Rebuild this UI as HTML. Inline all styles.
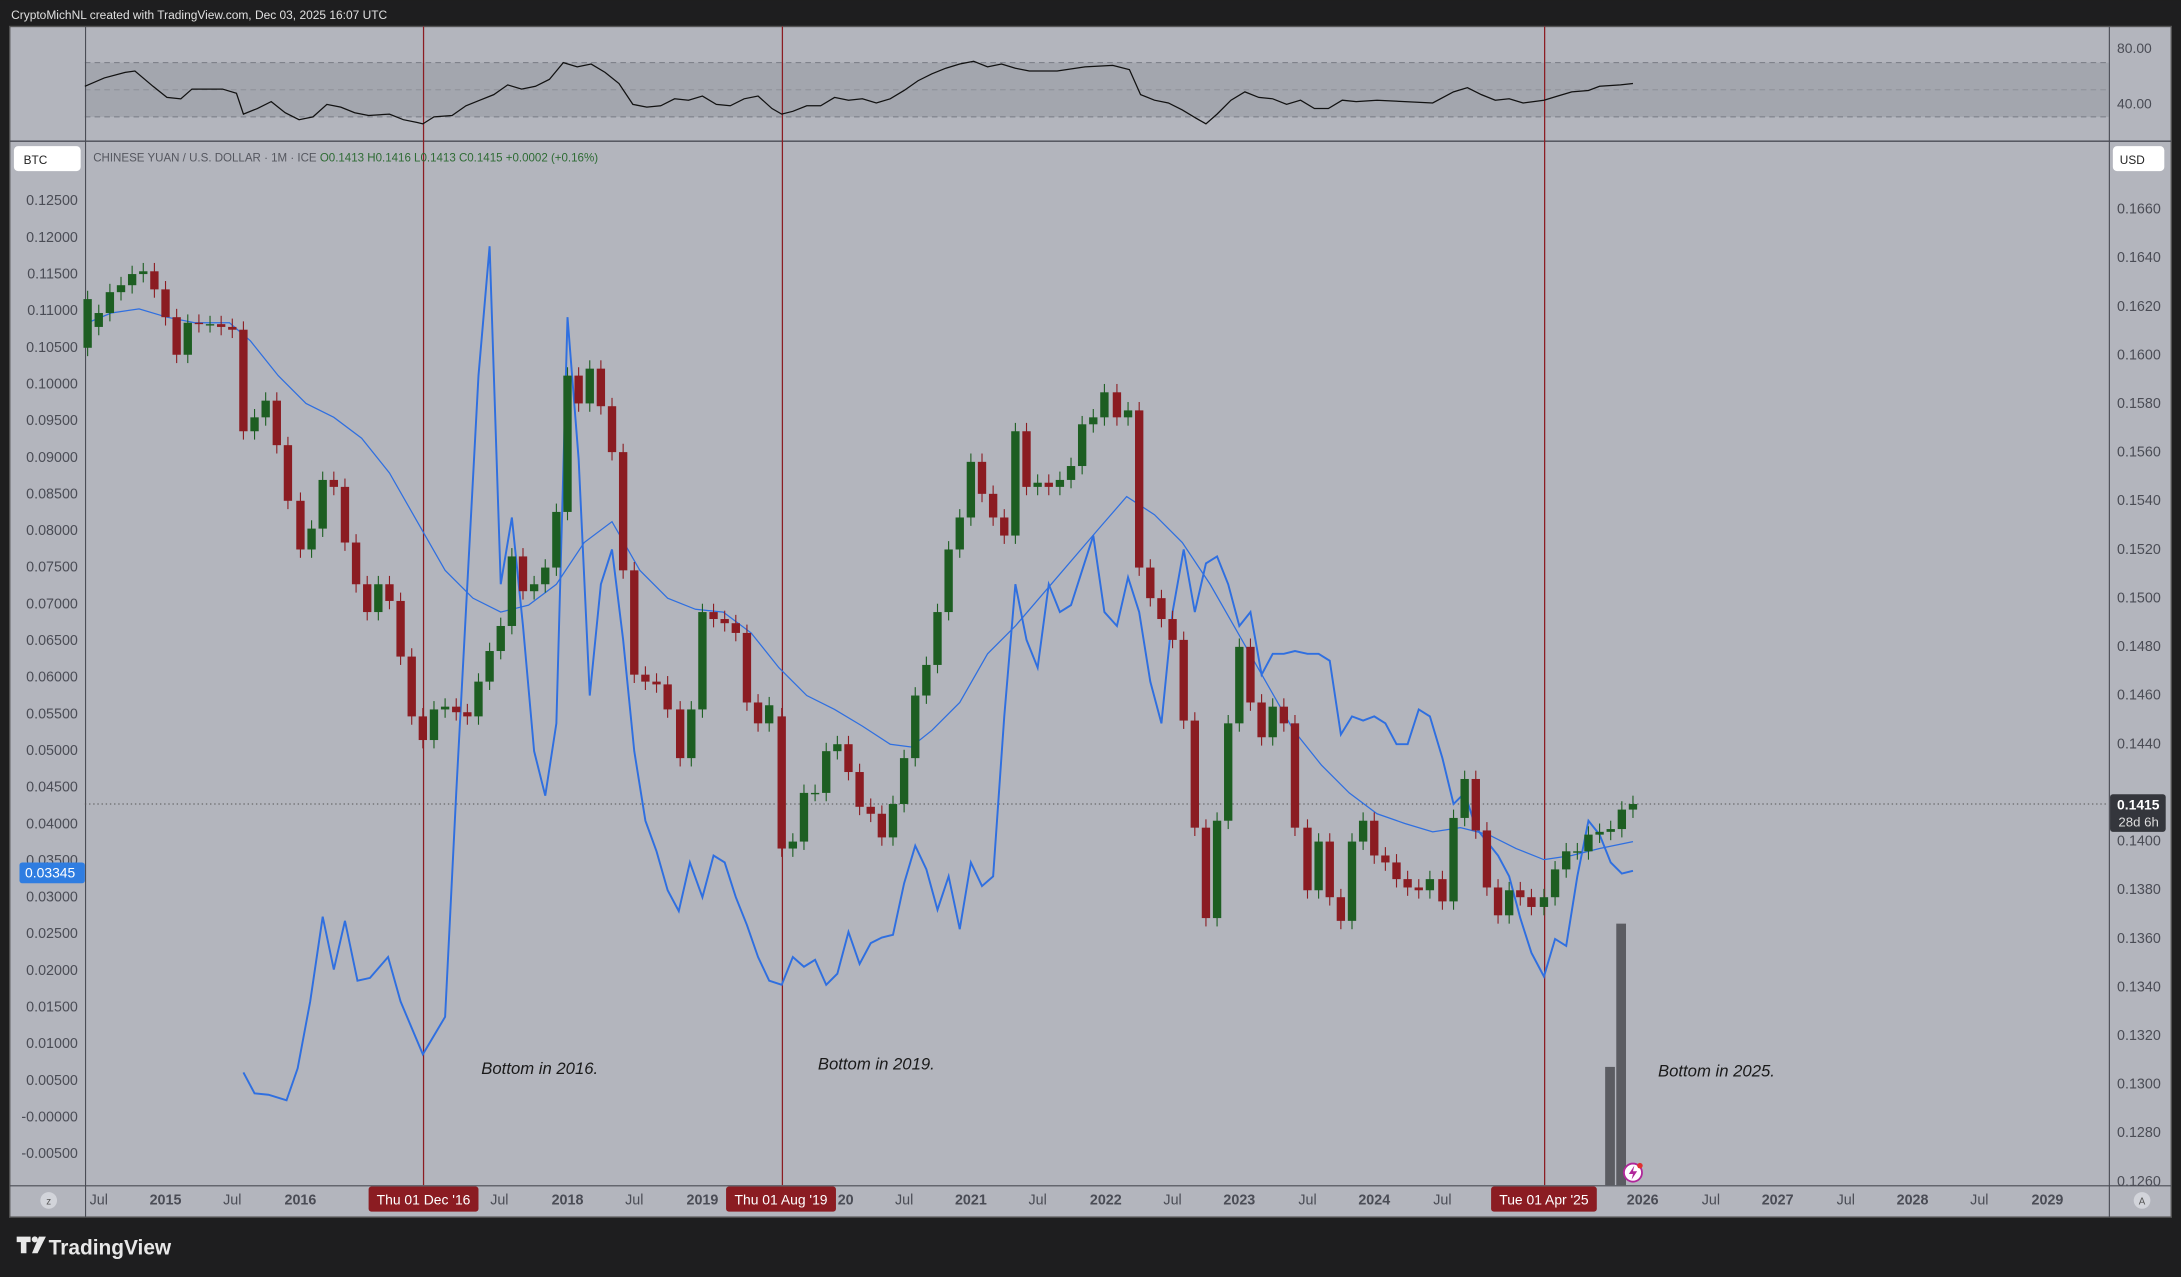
<!DOCTYPE html>
<html><head><meta charset="utf-8"><style>
html,body{margin:0;padding:0;background:#1e1e1f;overflow:hidden}
svg{display:block}
text{font-family:"Liberation Sans",sans-serif}
</style></head><body>
<svg id="s" width="2181" height="1277" viewBox="0 0 1568 918" xmlns="http://www.w3.org/2000/svg">
<rect width="1568" height="918" fill="#1e1e1f"/>
<text x="8" y="13.5" font-size="8.6" fill="#e0e0e0">CryptoMichNL created with TradingView.com, Dec 03, 2025 16:07 UTC</text>
<rect x="7" y="19" width="1554" height="856" fill="#b3b5bd" stroke="#555" stroke-width="1"/>
<rect x="61" y="45" width="1455" height="39" fill="#a3a6ae"/>
<line x1="61" y1="45" x2="1516" y2="45" stroke="#787b84" stroke-dasharray="4,3" stroke-width="0.7"/>
<line x1="61" y1="64.5" x2="1516" y2="64.5" stroke="#8a8d95" stroke-dasharray="4,3" stroke-width="0.6"/>
<line x1="61" y1="84" x2="1516" y2="84" stroke="#787b84" stroke-dasharray="4,3" stroke-width="0.7"/>
<line x1="7" y1="101.5" x2="1561" y2="101.5" stroke="#4a4c55" stroke-width="1"/>
<line x1="61.5" y1="19" x2="61.5" y2="875" stroke="#4a4c55" stroke-width="0.8"/>
<line x1="1516.5" y1="19" x2="1516.5" y2="875" stroke="#4a4c55" stroke-width="0.8"/>
<line x1="7" y1="852.5" x2="1561" y2="852.5" stroke="#4a4c55" stroke-width="0.8"/>
<g font-size="10" fill="#4a4c55">
<text x="1522" y="38">80.00</text><text x="1522" y="78">40.00</text>
</g>
<line x1="61" y1="578" x2="1516" y2="578" stroke="#555" stroke-dasharray="1,2" stroke-width="0.7"/>
<line x1="304.5" y1="19" x2="304.5" y2="852" stroke="#8b1c22" stroke-width="0.9"/>
<line x1="562.5" y1="19" x2="562.5" y2="852" stroke="#8b1c22" stroke-width="0.9"/>
<line x1="1110.5" y1="19" x2="1110.5" y2="852" stroke="#8b1c22" stroke-width="0.9"/>
<g id="g"></g>
<rect x="10" y="105" width="48" height="18" rx="3" fill="#fff"/>
<text x="17" y="118" font-size="8.5" fill="#222">BTC</text>
<rect x="1519" y="105" width="37" height="18" rx="3" fill="#fff"/>
<text x="1524" y="118" font-size="8.5" fill="#222">USD</text>
<text x="67" y="116" font-size="8.3" fill="#55575f">CHINESE YUAN / U.S. DOLLAR · 1M · ICE <tspan fill="#2e6b34">O0.1413  H0.1416  L0.1413  C0.1415  +0.0002 (+0.16%)</tspan></text>
<g id="la" font-size="10.3" fill="#4a4c55"></g>
<g id="ra" font-size="10.3" fill="#4a4c55"></g>
<rect x="14" y="620" width="47" height="15" rx="2" fill="#2f7de1"/>
<text x="18" y="631" font-size="10" fill="#fff">0.03345</text>
<rect x="1517" y="571" width="40" height="27" rx="2" fill="#34363c"/>
<text x="1522" y="582" font-size="10" fill="#fff" font-weight="bold">0.1415</text>
<text x="1523" y="594" font-size="9.5" fill="#ddd">28d 6h</text>
<g font-size="12" font-style="italic" fill="#1a1a1a">
<text x="346" y="772">Bottom in 2016.</text>
<text x="588" y="769">Bottom in 2019.</text>
<text x="1192" y="774">Bottom in 2025.</text>
</g>
<g id="ta" font-size="10.3" fill="#4a4c55"></g>
<rect x="265" y="853" width="79" height="18" rx="2" fill="#8b1c22"/>
<text x="304.5" y="866" font-size="10" fill="#fff" text-anchor="middle">Thu 01 Dec '16</text>
<rect x="522" y="853" width="79" height="18" rx="2" fill="#8b1c22"/>
<text x="561.5" y="866" font-size="10" fill="#fff" text-anchor="middle">Thu 01 Aug '19</text>
<rect x="1072" y="853" width="76" height="18" rx="2" fill="#8b1c22"/>
<text x="1110" y="866" font-size="10" fill="#fff" text-anchor="middle">Tue 01 Apr '25</text>
<circle cx="35" cy="863" r="6" fill="#d2d4da"/><text x="35" y="866" font-size="7" fill="#555" text-anchor="middle">z</text>
<circle cx="1540" cy="863" r="6" fill="#d2d4da"/><text x="1540" y="866" font-size="7" fill="#555" text-anchor="middle">A</text>
<circle cx="1174" cy="843" r="6.5" fill="#fff" stroke="#b0279a" stroke-width="1.3"/>
<path d="M1175 838 L1171 844 L1174 844 L1173 848 L1177 842 L1174 842Z" fill="#b0279a"/>
<circle cx="1179" cy="838" r="2" fill="#e03030"/>
<g fill="#e8e8e8">
<path d="M12 889 h10 v4 h-3 v8 h-4 v-8 h-3z"/><circle cx="25" cy="891" r="2.2"/><path d="M28 889 h5 l-6 12 h-4z"/>
</g>
<text x="35" y="902" font-size="15" font-weight="bold" fill="#e8e8e8">TradingView</text>
</svg>
<script>
var NS='http://www.w3.org/2000/svg',g=document.getElementById('g'),out='';
function t(id,s){document.getElementById(id).innerHTML+=s;}
// left axis
var lv=['0.12500','0.12000','0.11500','0.11000','0.10500','0.10000','0.09500','0.09000','0.08500','0.08000','0.07500','0.07000','0.06500','0.06000','0.05500','0.05000','0.04500','0.04000','0.03500','0.03000','0.02500','0.02000','0.01500','0.01000','0.00500','-0.00000','-0.00500'];
lv.forEach(function(v,i){var y=144+i*26.35;t('la','<text x="56" y="'+(y+3.5)+'" text-anchor="end">'+v+'</text>');});
for(var i=0;i<=20;i++){var v=(0.166-i*0.002).toFixed(4),y=150+i*34.95;if(Math.abs(y-578)<12||Math.abs(y-592)<10)continue;t('ra','<text x="1522" y="'+(y+3.5)+'">'+v+'</text>');}
var tl=[[71,'Jul',0],[119,'2015',1],[167,'Jul',0],[216,'2016',1],[359,'Jul',0],[408,'2018',1],[456,'Jul',0],[505,'2019',1],[608,'20',1],[650,'Jul',0],[698,'2021',1],[746,'Jul',0],[795,'2022',1],[843,'Jul',0],[891,'2023',1],[940,'Jul',0],[988,'2024',1],[1037,'Jul',0],[1181,'2026',1],[1230,'Jul',0],[1278,'2027',1],[1327,'Jul',0],[1375,'2028',1],[1423,'Jul',0],[1472,'2029',1]];
tl.forEach(function(a){t('ta','<text x="'+a[0]+'" y="866" text-anchor="middle"'+(a[2]?' font-weight="bold"':'')+'>'+a[1]+'</text>');});
// RSI
var rsi=[[61,62],[75,56],[90,52],[97,51],[110,62],[120,70],[130,71],[138,64],[160,64],[170,67],[175,82],[185,78],[195,73],[205,81],[215,86],[225,84],[235,75],[245,77],[255,81],[265,83],[280,82],[290,86],[300,88],[304,89],[312,84],[325,83],[335,76],[345,72],[355,68],[365,61],[375,64],[385,62],[395,57],[405,45],[415,48],[425,46],[435,52],[445,60],[455,75],[465,77],[475,76],[485,71],[495,72],[505,69],[515,75],[525,76],[535,71],[545,69],[555,78],[562,82],[570,80],[580,76],[590,76],[600,70],[610,72],[620,71],[630,74],[640,71],[650,65],[660,58],[670,53],[680,49],[690,46],[700,44],[710,48],[720,46],[730,49],[740,51],[760,51],[780,48],[800,47],[812,50],[820,68],[830,72],[840,74],[850,79],[860,85],[867,89],[875,82],[885,72],[895,66],[905,70],[915,71],[925,75],[935,72],[945,78],[955,78],[965,72],[975,73],[990,72],[1010,73],[1030,74],[1045,66],[1055,63],[1065,68],[1075,72],[1085,71],[1095,74],[1110,72],[1120,69],[1130,66],[1142,65],[1150,62],[1165,61],[1174,60]];
out+='<polyline points="'+rsi.join(' ')+'" fill="none" stroke="#111" stroke-width="0.9"/>';
// volume
out+='<rect x="1154" y="767" width="7" height="85" fill="#5b5c62"/><rect x="1162" y="664" width="7" height="188" fill="#5b5c62"/>';
// MA
var ma=[[63,232],[80,225],[100,222],[120,228],[140,232],[165,232],[180,245],[200,270],[220,290],[240,300],[260,315],[280,340],[300,375],[320,410],[340,430],[360,440],[380,435],[400,420],[420,390],[440,375],[460,410],[480,430],[500,438],[520,440],[540,455],[560,480],[580,500],[600,510],[620,522],[640,535],[655,537],[670,525],[690,505],[710,470],[730,450],[760,415],[790,380],[810,357],[830,370],[850,390],[870,420],[890,455],[910,490],[930,525],[950,550],[970,570],[990,585],[1010,592],[1030,598],[1050,595],[1070,600],[1090,610],[1110,618],[1130,615],[1150,610],[1174,605]];
out+='<polyline points="'+ma.join(' ')+'" fill="none" stroke="#2f6fe0" stroke-width="0.9"/>';
var sp=[[175,771],[183,786],[193,787],[206,791],[214,768],[223,720],[232,659],[240,697],[248,662],[257,705],[266,703],[279,688],[288,720],[304,758],[320,731],[328,570],[344,270],[352,177],[360,420],[368,372],[376,450],[384,540],[392,572],[400,520],[408,228],[416,330],[424,500],[432,420],[440,395],[448,460],[456,540],[464,590],[472,612],[480,640],[488,655],[496,620],[505,645],[513,615],[521,620],[529,645],[537,665],[545,688],[553,705],[562,708],[570,688],[578,695],[586,690],[594,708],[602,700],[610,670],[618,693],[626,678],[634,674],[642,672],[650,635],[658,608],[666,625],[674,654],[682,630],[690,668],[698,620],[706,637],[714,630],[722,515],[730,420],[738,460],[746,480],[754,420],[762,440],[770,435],[778,410],[786,385],[794,440],[803,450],[811,415],[819,440],[827,490],[835,520],[843,440],[851,395],[859,440],[867,405],[875,400],[883,420],[891,450],[899,440],[907,485],[915,470],[923,470],[931,468],[940,470],[948,470],[956,475],[964,528],[972,515],[980,518],[988,515],[996,520],[1004,535],[1012,535],[1020,510],[1028,515],[1037,545],[1045,578],[1053,570],[1061,595],[1069,605],[1077,615],[1085,630],[1093,660],[1101,685],[1110,702],[1118,675],[1126,680],[1134,630],[1142,590],[1150,600],[1158,620],[1166,628],[1174,626]];
out+='<polyline points="'+sp.join(' ')+'" fill="none" stroke="#2f6fe0" stroke-width="1.4"/>';
// candles
var c=[[63,250,215],[71,235,225],[79,225,210],[87,210,205],[95,205,197],[103,197,195],[111,195,208],[119,208,228],[127,228,255],[135,255,232],[143,232,233],[151,233,233],[159,233,235],[167,235,237],[175,237,310],[183,310,300],[191,300,288],[199,288,320],[207,320,360],[216,360,395],[224,395,380],[232,380,345],[240,345,350],[248,350,390],[256,390,420],[264,420,440],[272,440,420],[280,420,432],[288,432,472],[296,472,515],[304,515,532],[312,532,510],[320,510,508],[328,508,512],[336,512,515],[344,515,490],[352,490,468],[360,468,450],[368,450,400],[376,400,425],[384,425,420],[392,420,408],[400,408,368],[408,368,270],[416,270,290],[424,290,265],[432,265,292],[440,292,325],[448,325,410],[456,410,485],[464,485,490],[472,490,492],[480,492,510],[489,510,545],[497,545,510],[505,510,440],[513,440,445],[521,445,448],[529,448,455],[537,455,505],[545,505,520],[553,520,507],[562,515,610],[570,610,605],[578,605,570],[586,570,570],[594,570,540],[602,540,535],[610,535,555],[618,555,580],[626,580,585],[634,585,602],[642,602,578],[650,578,545],[658,545,500],[666,500,478],[674,478,440],[682,440,395],[690,395,372],[698,372,332],[706,332,355],[714,355,372],[722,372,385],[730,385,310],[738,310,350],[746,350,347],[754,347,350],[762,350,345],[770,345,335],[778,335,305],[786,305,300],[794,300,282],[803,282,300],[811,300,295],[819,295,408],[827,408,430],[835,430,445],[843,445,460],[851,460,518],[859,518,595],[867,595,660],[875,660,590],[883,590,520],[891,520,465],[899,465,505],[907,505,530],[915,530,508],[923,508,520],[931,520,595],[940,595,640],[948,640,605],[956,605,645],[964,645,662],[972,662,605],[980,605,590],[988,590,615],[996,615,620],[1004,620,632],[1012,632,638],[1020,638,640],[1028,640,632],[1037,632,648],[1045,648,588],[1053,588,560],[1061,560,597],[1069,597,638],[1077,638,658],[1085,658,640],[1093,640,645],[1101,645,652],[1110,652,645],[1118,645,625],[1126,625,612],[1134,612,612],[1142,612,600],[1150,600,598],[1158,598,596],[1166,596,582],[1174,582,578]];
c.forEach(function(k){var x=k[0],o=k[1],cl=k[2],up=cl<=o,col=up?'#1d5e22':'#8b1c22';var hi=Math.min(o,cl)-6,lo=Math.max(o,cl)+6;
out+='<line x1="'+x+'" y1="'+hi+'" x2="'+x+'" y2="'+lo+'" stroke="'+col+'" stroke-width="0.8"/>';
var h=Math.max(1,Math.abs(o-cl));out+='<rect x="'+(x-3)+'" y="'+Math.min(o,cl)+'" width="6" height="'+h+'" fill="'+col+'"/>';});
g.innerHTML=out;
</script>
</body></html>
